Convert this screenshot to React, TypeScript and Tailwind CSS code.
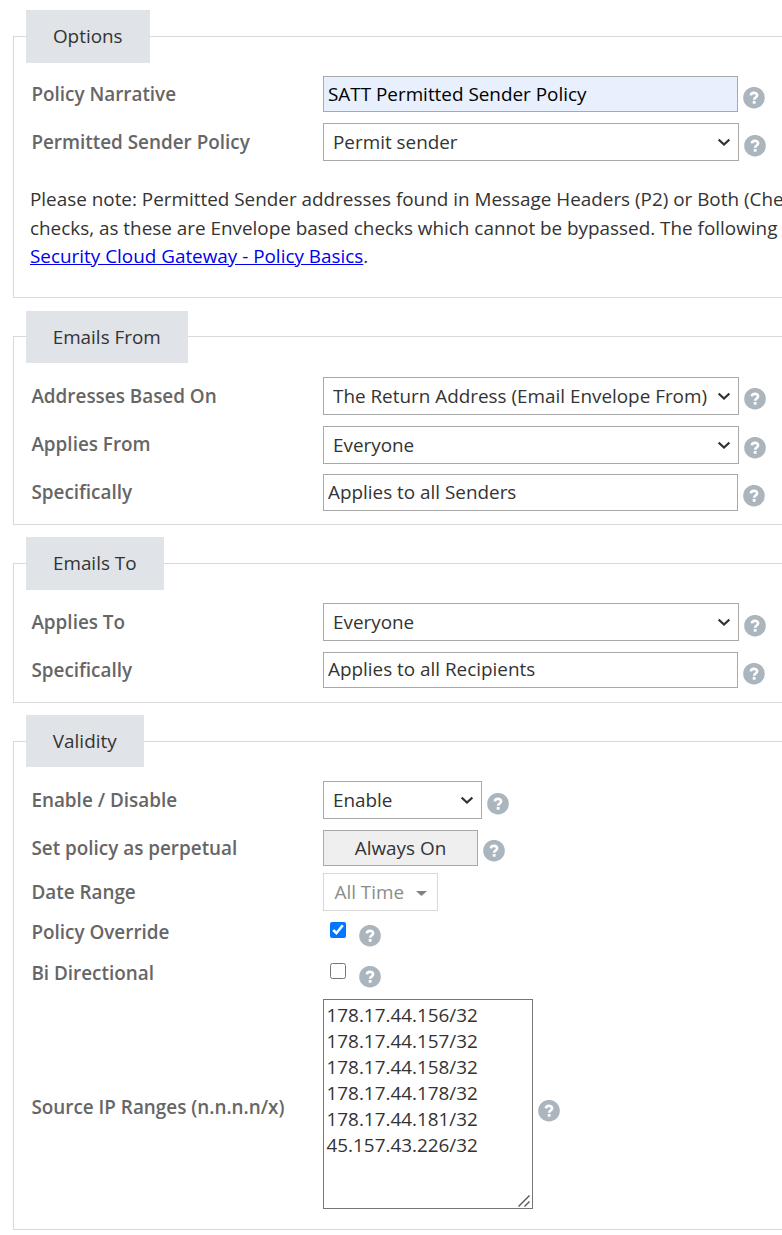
import React from 'react';
import clsx from 'clsx';

const HelpIcon: React.FC<{ className?: string }> = ({ className }) => (
  <svg className={clsx('block h-[22px] w-[22px] shrink-0', className)} viewBox="0 0 22 22">
    <circle cx="11" cy="10.7" r="10.8" fill="#abb5bd" />
    <path
      d="M7.9 8.3C8 6.7 9.3 5.9 11 5.9c1.9 0 3.1 0.9 3.1 2.4 0 2.3-2.9 2.2-3 4.5"
      fill="none"
      stroke="#fff"
      strokeWidth="2.6"
    />
    <rect x="9.7" y="14" width="2.9" height="2.8" rx="0.6" fill="#fff" />
  </svg>
);

interface SectionProps {
  title: string;
  legendClass: string;
  className: string;
  children: React.ReactNode;
}

const Section: React.FC<SectionProps> = ({ title, legendClass, className, children }) => (
  <fieldset className={clsx('ml-[13px] w-[1200px] border border-[#d9d9d9]', className)}>
    <legend
      className={clsx(
        'ml-3 flex items-center justify-center bg-[#e0e3e8] pr-[0.5px] text-[#333]',
        legendClass,
      )}
    >
      {title}
    </legend>
    {children}
  </fieldset>
);

interface RowProps {
  label: string;
  className: string;
  help?: string;
  children: React.ReactNode;
}

const Row: React.FC<RowProps> = ({ label, className, help, children }) => (
  <div className={clsx('ml-[17px] flex items-start', className)}>
    <label className="flex w-[292px] shrink-0 self-stretch items-center pl-[0.4px] font-semibold text-[#666]">
      {label}
    </label>
    {children}
    {help && <HelpIcon className={help} />}
  </div>
);

const SelectBox: React.FC<{ value: string; className: string }> = ({ value, className }) => (
  <div className={clsx('relative h-[38px] shrink-0', className)}>
    <select className="block h-full w-full appearance-none border border-[#a9a9a9] bg-white pl-[9px] text-[#333] outline-none">
      <option>{value}</option>
    </select>
    <svg
      className="pointer-events-none absolute right-[9px] top-[15px] h-[9px] w-3"
      viewBox="0 0 12 9"
      fill="none"
      stroke="#333"
      strokeWidth="2.2"
    >
      <path d="M0.6 1.5 6 6.6l5.4-5.1" />
    </svg>
  </div>
);

const TextBox: React.FC<{ value: string; className: string }> = ({ value, className }) => (
  <input
    type="text"
    defaultValue={value}
    className={clsx('w-[415px] shrink-0 border border-[#a9a9a9] pb-px pl-1 outline-none', className)}
  />
);

const IP_RANGES = [
  '178.17.44.156/32',
  '178.17.44.157/32',
  '178.17.44.158/32',
  '178.17.44.178/32',
  '178.17.44.181/32',
  '45.157.43.226/32',
];

export default function App() {
  return (
    <div className="h-[1235px] w-full overflow-hidden bg-white pt-[10px] font-['Open_Sans',sans-serif] text-[18.89px] leading-[26px] text-[#333]">
      <Section title="Options" legendClass="h-[53px] w-[124px] pb-px" className="h-[288px]">
        <Row label="Policy Narrative" className="mt-[7px] h-12" help="mt-[17px] ml-[5px]">
          <TextBox value="SATT Permitted Sender Policy" className="mt-1.5 h-9 bg-[#e8f0fe] text-black" />
        </Row>
        <Row label="Permitted Sender Policy" className="h-12" help="mt-[17px] ml-[5px]">
          <SelectBox value="Permit sender" className="mt-[5px] w-[416px]" />
        </Row>
        <p className="mt-[19px] ml-4 whitespace-nowrap leading-[28.5px]">
          Please note: Permitted Sender addresses found in Message Headers (P2) or Both (Che
          <br />
          checks, as these are Envelope based checks which cannot be bypassed. The following
          <br />
          <a href="#" className="text-[#0000ee] underline">
            Security Cloud Gateway - Policy Basics
          </a>
          .
        </p>
      </Section>

      <Section title="Emails From" legendClass="h-[52px] w-[162px]" className="mt-[12.6px] h-[214.4px]">
        <Row label="Addresses Based On" className="mt-[9px] h-12" help="mt-4 ml-[5px]">
          <SelectBox value="The Return Address (Email Envelope From)" className="mt-[5px] w-[416px]" />
        </Row>
        <Row label="Applies From" className="h-12" help="mt-[17px] ml-[5px]">
          <SelectBox value="Everyone" className="mt-1.5 w-[416px]" />
        </Row>
        <Row label="Specifically" className="h-12" help="mt-[17px] ml-[5px]">
          <TextBox value="Applies to all Senders" className="mt-1.5 h-[37px]" />
        </Row>
      </Section>

      <Section title="Emails To" legendClass="h-[53px] w-[138px] pb-px" className="mt-3 h-[166px]">
        <Row label="Applies To" className="mt-2 h-12" help="mt-[17px] ml-[5px]">
          <SelectBox value="Everyone" className="mt-[5px] w-[416px]" />
        </Row>
        <Row label="Specifically" className="h-12" help="mt-[17px] ml-[5px]">
          <TextBox value="Applies to all Recipients" className="mt-1.5 h-9" />
        </Row>
      </Section>

      <Section title="Validity" legendClass="h-[52px] w-[118px]" className="mt-[12.1px] h-[515px]">
        <Row label="Enable / Disable" className="mt-[9px] h-12" help="mt-[17px] ml-[5px]">
          <SelectBox value="Enable" className="mt-[5px] w-[159px]" />
        </Row>
        <Row label="Set policy as perpetual" className="h-12" help="mt-4 ml-[5px]">
          <button className="mt-1.5 h-9 w-[155px] border border-[#a9a9a9] bg-[#efefef]">
            Always On
          </button>
        </Row>
        <Row label="Date Range" className="h-10">
          <button className="mt-px flex h-[38px] w-[115px] items-center border border-[#d9d9d9] pl-[10.5px] text-[#8c8c8c]">
            All Time
            <svg className="ml-3 mt-0.5 h-[5px] w-[11px]" viewBox="0 0 11 5" fill="#808080">
              <path d="M0 0h11L5.5 5z" />
            </svg>
          </button>
        </Row>
        <Row label="Policy Override" className="h-10" help="mt-[13px] ml-[13px]">
          <input type="checkbox" defaultChecked className="mt-[10px] ml-[7px] h-4 w-4" />
        </Row>
        <Row label="Bi Directional" className="h-[41px]" help="mt-3.5 ml-[13px]">
          <input type="checkbox" className="mt-[11px] ml-[7px] h-4 w-4" />
        </Row>
        <Row label="Source IP Ranges (n.n.n.n/x)" className="h-[228px]" help="mt-[107px] ml-[5px]">
          <div className="relative mt-1.5 h-[210px] w-[210px]">
            <textarea
              defaultValue={IP_RANGES.join('\n')}
              className="block h-full w-full resize-none border border-[#767676] px-[2.5px] py-[2px] outline-none"
            />
            <svg
              className="pointer-events-none absolute right-[3px] bottom-[2px] h-3 w-3"
              viewBox="0 0 12 12"
              stroke="#555"
              strokeWidth="1.4"
            >
              <path d="M0.5 11.5 11.5 0.5M6.5 11.5l5-5" />
            </svg>
          </div>
        </Row>
      </Section>
    </div>
  );
}
